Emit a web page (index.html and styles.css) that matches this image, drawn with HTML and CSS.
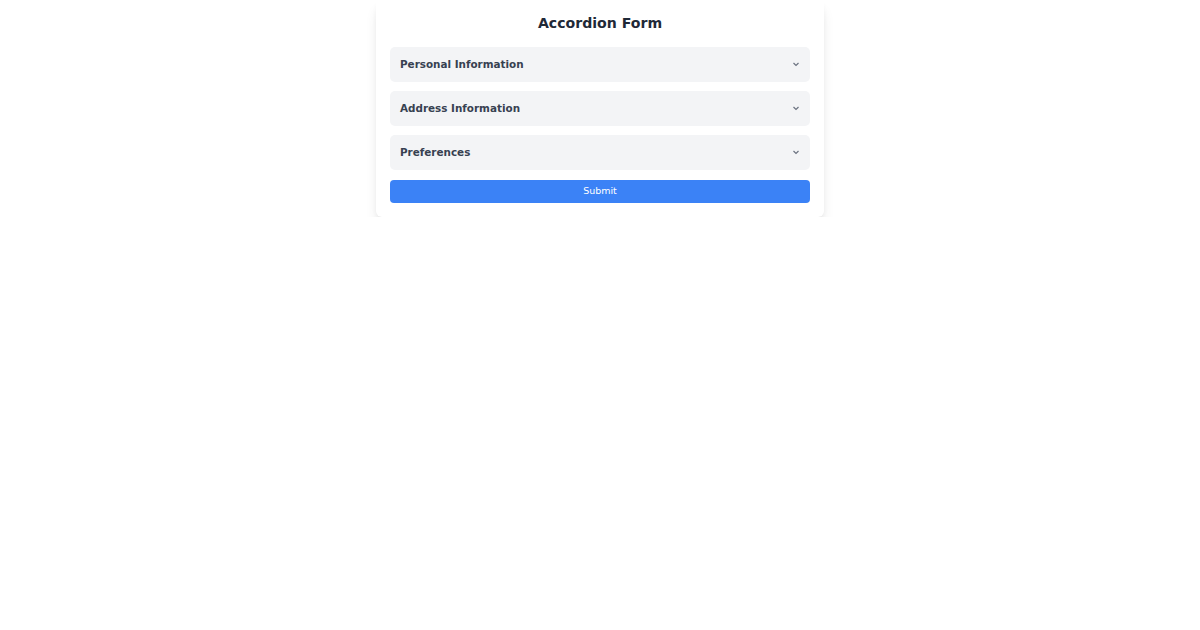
FILE: index.html
```html
<!DOCTYPE html>
<html lang="en">
<head>
<meta charset="utf-8">
<title>Accordion Form</title>
<link rel="stylesheet" href="styles.css">
</head>
<body>
<div class="card">
  <h1 class="title">Accordion Form</h1>
  <div class="items">
    <div class="item"><span>Personal Information</span><svg class="chev" viewBox="0 0 8 8" width="8" height="8"><path d="M1.5 3 L4 5.5 L6.5 3" fill="none" stroke="#6b7280" stroke-width="1.2"/></svg></div>
    <div class="item"><span>Address Information</span><svg class="chev" viewBox="0 0 8 8" width="8" height="8"><path d="M1.5 3 L4 5.5 L6.5 3" fill="none" stroke="#6b7280" stroke-width="1.2"/></svg></div>
    <div class="item"><span>Preferences</span><svg class="chev" viewBox="0 0 8 8" width="8" height="8"><path d="M1.5 3 L4 5.5 L6.5 3" fill="none" stroke="#6b7280" stroke-width="1.2"/></svg></div>
    <button class="submit" type="button">Submit</button>
  </div>
</div>
</body>
</html>
```

FILE: styles.css
```css
html, body {
  margin: 0;
  padding: 0;
  background: #ffffff;
  font-family: "DejaVu Sans", sans-serif;
}

.card {
  width: 448px;
  box-sizing: border-box;
  margin: 0 auto;
  padding: 13px 14px 14px;
  background: #ffffff;
  border-radius: 0 0 6px 6px;
  box-shadow: 0 9px 14px -3px rgba(0, 0, 0, 0.12), 0 3px 6px -3px rgba(0, 0, 0, 0.10);
}

.title {
  margin: 0 0 14px;
  font-size: 14.1px;
  line-height: 20px;
  font-weight: 700;
  color: #1f2937;
  text-align: center;
}

.items {
  display: flex;
  flex-direction: column;
  gap: 9px;
}

.item {
  height: 35px;
  box-sizing: border-box;
  padding: 0 10px 1px;
  background: #f3f4f6;
  border-radius: 5px;
  display: flex;
  align-items: center;
  justify-content: space-between;
  font-size: 10.4px;
  font-weight: 700;
  color: #374151;
}

.chev {
  display: block;
}

.submit {
  height: 23px;
  margin-top: 1px;
  border: 0;
  border-radius: 4px;
  background: #3b82f6;
  color: #ffffff;
  font-family: "DejaVu Sans", sans-serif;
  font-size: 9.5px;
  line-height: 12px;
  padding: 0 0 2px;
}
```
